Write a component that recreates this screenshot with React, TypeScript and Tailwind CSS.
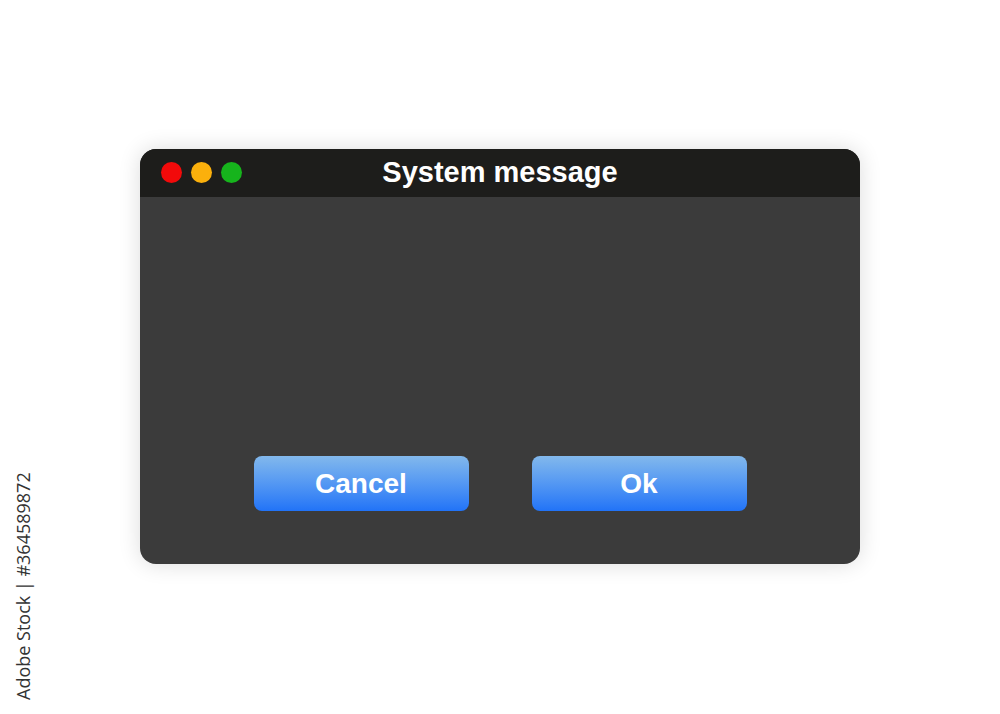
import React from "react";

const dots = ["bg-[#f20a0a]", "bg-[#fbb00c]", "bg-[#16b41c]"];

function DialogButton({ label }: { label: string }) {
  return (
    <button className="w-[215px] h-[55px] rounded-[8px] bg-gradient-to-b from-[#82b8ec] to-[#2173f7] text-white text-[28px] font-bold leading-none flex items-center justify-center">
      {label}
    </button>
  );
}

export default function App() {
  return (
    <main
      className="relative w-full h-[714px] bg-white flex items-start justify-center pt-[149px]"
      style={{ fontFamily: '"Liberation Sans", Arial, sans-serif' }}
    >
      <div className="w-[720px] h-[415px] rounded-[16px] overflow-hidden bg-[#3b3b3b] shadow-[0_0_22px_rgba(0,0,0,0.14)] flex flex-col">
        <div className="relative h-[48px] bg-[#1d1d1b] flex items-center justify-center">
          <div className="absolute left-[21px] top-[13px] flex gap-[9px]">
            {dots.map((c) => (
              <span key={c} className={`block w-[21px] h-[21px] rounded-full ${c}`} />
            ))}
          </div>
          <h1 className="text-white text-[29px] font-bold leading-none -mt-[1px]">
            System message
          </h1>
        </div>
        <div className="flex-1 flex items-end justify-center gap-[63px] pb-[53px]">
          <DialogButton label="Cancel" />
          <DialogButton label="Ok" />
        </div>
      </div>

      <div
        className="absolute left-[13px] top-[700px] origin-top-left -rotate-90 whitespace-nowrap text-[#333333] text-[18px] font-medium leading-[20px]"
        style={{ fontFamily: '"Open Sans", sans-serif' }}
      >
        Adobe Stock | #364589872
      </div>
    </main>
  );
}
